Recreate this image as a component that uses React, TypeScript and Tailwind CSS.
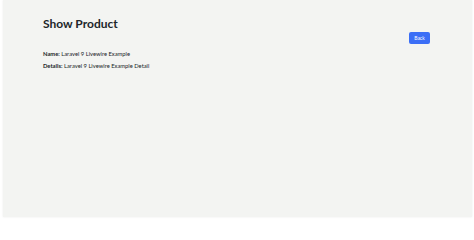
export default function App() {
  return (
    <div className="w-[474px] h-[220px] bg-white pl-[3px] pr-[2px] pb-[3px] font-['Lato',sans-serif]">
      <div className="h-full bg-[#f3f4f2] shadow-[0_0_2px_rgba(0,0,0,0.08)] pl-[40px] pr-[42px] pt-[14px]">
        <h2 className="text-[12px] leading-[20px] font-bold text-[#212529]">Show Product</h2>
        <div className="flex justify-end mt-[-2px]">
          <button
            type="button"
            className="h-[12px] w-[21px] rounded-[2px] bg-[#3b6ef6] text-white text-[5px] leading-[12px]"
          >
            Back
          </button>
        </div>
        <div className="mt-[5px] flex flex-col gap-[3px] text-[5.8px] leading-[9px] text-[#212529]">
          <p>
            <strong className="font-bold">Name:</strong> Laravel 9 Livewire Example
          </p>
          <p>
            <strong className="font-bold">Details:</strong> Laravel 9 Livewire Example Detail
          </p>
        </div>
      </div>
    </div>
  );
}
